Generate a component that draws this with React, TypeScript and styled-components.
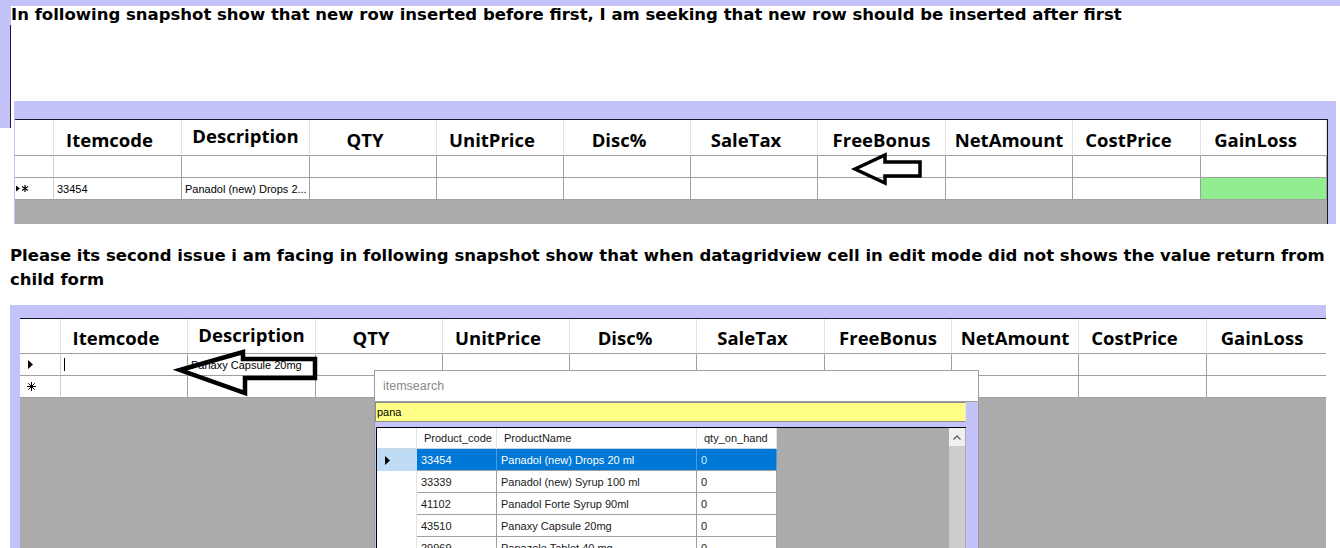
import React from "react";
import styled, { createGlobalStyle } from "styled-components";

const LAVENDER = "#c3c3f9";
const GRID_BG = "#ababab";
const CELL_LINE = "#a0a0a0";
const HEAD_LINE = "#e2e2e2";
const DARK = "#15152e";

const GlobalStyle = createGlobalStyle`
  html, body { margin: 0; padding: 0; background: #ffffff; }
  body { font-family: "Liberation Sans", Arial, sans-serif; color: #000; }
  * { box-sizing: border-box; }
`;

const Page = styled.div`
  position: relative;
  width: 1340px;
  height: 548px;
  overflow: hidden;
  display: flex;
  flex-direction: column;
`;

const TopBand = styled.div`
  height: 6px;
  flex: none;
  background: ${LAVENDER};
`;

const TopSection = styled.section`
  display: flex;
  height: 218px;
  flex: none;
`;

const LeftStrip = styled.div`
  width: 11px;
  height: 122px;
  flex: none;
  background: linear-gradient(#1c1c3a, #1c1c3a) right bottom / 1px 103px no-repeat,
    ${LAVENDER};
`;

const TopContent = styled.div`
  flex: 1;
  display: flex;
  flex-direction: column;
  min-width: 0;
`;

const Heading = styled.h1<{ $indent: number; $mt: number }>`
  margin: ${(p) => p.$mt}px 0 0 ${(p) => p.$indent}px;
  font-family: "DejaVu Sans", Verdana, sans-serif;
  font-weight: 700;
  font-size: 16.5px;
  line-height: 18px;
  white-space: nowrap;
  color: #000;
`;

const Heading2 = styled(Heading)`
  line-height: 24px;
`;

const Frame = styled.div<{
  $mt: number;
  $ml: number;
  $w: number;
  $h: number;
  $pt: number;
  $pl: number;
  $pr: number;
}>`
  position: relative;
  flex: none;
  margin: ${(p) => p.$mt}px 0 0 ${(p) => p.$ml}px;
  width: ${(p) => p.$w}px;
  height: ${(p) => p.$h}px;
  padding: ${(p) => p.$pt}px ${(p) => p.$pr}px 0 ${(p) => p.$pl}px;
  background: ${LAVENDER};
`;

const DataGrid = styled.div<{ $edge?: boolean }>`
  height: 100%;
  background: ${GRID_BG};
  border-top: 1px solid ${DARK};
  border-right: ${(p) => (p.$edge ? `1px solid ${DARK}` : "none")};
  overflow: hidden;
  display: flex;
  flex-direction: column;
`;

const GridRow = styled.div<{ $cols: string; $h: number }>`
  display: grid;
  grid-template-columns: ${(p) => p.$cols};
  height: ${(p) => p.$h}px;
  flex: none;
`;

const HeadCell = styled.div<{ $pt: number; $full?: boolean }>`
  background: #fff;
  border-right: 1px solid ${HEAD_LINE};
  border-bottom: 1px solid ${CELL_LINE};
  display: flex;
  justify-content: center;
  align-items: flex-start;
  padding-top: ${(p) => p.$pt}px;
  padding-right: ${(p) => (p.$full ? 0 : 16)}px;
  font-family: "Open Sans", "DejaVu Sans", sans-serif;
  font-weight: 700;
  font-size: 18.5px;
  line-height: 25px;
  white-space: nowrap;
  color: #000;
`;

const Cell = styled.div<{ $bg?: string }>`
  background: ${(p) => p.$bg ?? "#fff"};
  border-right: 1px solid ${CELL_LINE};
  border-bottom: 1px solid ${CELL_LINE};
  display: flex;
  align-items: center;
  padding-left: 3px;
  font-family: "Liberation Sans", Arial, sans-serif;
  font-size: 11px;
  white-space: nowrap;
  overflow: hidden;
  color: #000;
`;

const RowHead = styled(Cell)<{ $pad: number }>`
  padding-left: ${(p) => p.$pad}px;
  border-right-color: #d0d0d0;
`;

const Caret = styled.span`
  display: block;
  width: 1px;
  height: 13px;
  background: #000;
`;

const Arrow = styled.svg<{ $x: number; $y: number }>`
  position: absolute;
  left: ${(p) => p.$x}px;
  top: ${(p) => p.$y}px;
  overflow: visible;
  pointer-events: none;
`;

/* itemsearch child form */
const Popup = styled.div`
  position: absolute;
  left: 364px;
  top: 65px;
  width: 605px;
  height: 200px;
  border: 1px solid #9c9c9c;
  background: ${LAVENDER};
  display: flex;
  flex-direction: column;
`;

const TitleBar = styled.div`
  height: 31px;
  flex: none;
  background: #fff;
  border-bottom: 1px solid #a0a0a0;
  display: flex;
  align-items: center;
  padding-left: 8px;
  font-family: "Liberation Sans", Arial, sans-serif;
  font-size: 12.5px;
  color: #8a8a8a;
`;

const PopBody = styled.div`
  flex: 1;
  display: flex;
  flex-direction: column;
  padding-right: 12px;
`;

const SearchBox = styled.input`
  height: 20px;
  width: 100%;
  margin: 0;
  padding: 0 0 0 1px;
  border: 1px solid #8c8c8c;
  border-right-color: #e6e6e6;
  background: #ffff88;
  font-family: "Liberation Sans", Arial, sans-serif;
  font-size: 11px;
  color: #000;
  outline: none;
`;

const InnerGrid = styled.div`
  flex: 1;
  margin: 5px 0 0 1px;
  border-top: 1px solid #000;
  border-left: 1px solid #000;
  background: ${GRID_BG};
  display: flex;
`;

const PopTable = styled.div`
  flex: 1;
  display: flex;
  flex-direction: column;
`;

const PopRow = styled.div<{ $h: number }>`
  display: grid;
  grid-template-columns: 40px 80px 200px 80px;
  height: ${(p) => p.$h}px;
`;

const PopHead = styled.div`
  background: #fff;
  border-right: 1px solid #e3e3e3;
  border-bottom: 1px solid #c9d6e2;
  display: flex;
  align-items: center;
  padding-left: 7px;
  font-family: "Liberation Sans", Arial, sans-serif;
  font-size: 11px;
  color: #1a1a1a;
  white-space: nowrap;
`;

const PopCell = styled.div<{ $sel?: boolean; $fg?: string }>`
  background: ${(p) => (p.$sel ? "#0078d7" : "#fff")};
  border-right: 1px solid ${(p) => (p.$sel ? "#4a9be0" : CELL_LINE)};
  border-bottom: 1px solid ${CELL_LINE};
  display: flex;
  align-items: center;
  padding-left: 4px;
  font-family: "Liberation Sans", Arial, sans-serif;
  font-size: 11px;
  color: ${(p) => p.$fg ?? (p.$sel ? "#fff" : "#1a1a1a")};
  white-space: nowrap;
  overflow: hidden;
`;

const PopRowHead = styled.div<{ $sel?: boolean }>`
  background: ${(p) => (p.$sel ? "#bfdcf4" : "#fff")};
  border-right: 1px solid ${(p) => (p.$sel ? "#bfdcf4" : "#e3e3e3")};
  display: flex;
  align-items: center;
  padding-left: 8px;
`;

const ScrollBar = styled.div`
  width: 16px;
  flex: none;
  margin-right: 1px;
  background: #cdcdcd;
  display: flex;
  flex-direction: column;
`;

const ScrollButton = styled.div`
  height: 18px;
  background: #f0f0f0;
  display: flex;
  align-items: center;
  justify-content: center;
`;

const COLS1 = "39px 128px 128px 127px 127px 127px 127px 128px 127px 128px 126px";
const COLS2 = "41px 127px 128px 127px 127px 127px 128px 127px 127px 128px 127px";

const HEADERS = [
  "Itemcode",
  "Description",
  "QTY",
  "UnitPrice",
  "Disc%",
  "SaleTax",
  "FreeBonus",
  "NetAmount",
  "CostPrice",
  "GainLoss",
];
const FULL = ["Description", "FreeBonus", "NetAmount"];

const ITEMS = [
  ["33454", "Panadol (new) Drops 20 ml", "0"],
  ["33339", "Panadol (new) Syrup 100 ml", "0"],
  ["41102", "Panadol Forte Syrup 90ml", "0"],
  ["43510", "Panaxy Capsule 20mg", "0"],
  ["29969", "Panazole Tablet 40 mg", "0"],
];

const CurrentMark: React.FC = () => (
  <svg width="5" height="9" viewBox="0 0 5 9">
    <polygon points="0,0 5,4.5 0,9" fill="#000" />
  </svg>
);

const NewMark: React.FC = () => (
  <svg width="9" height="9" viewBox="0 0 9 9" stroke="#000" strokeWidth="1">
    <line x1="4.5" y1="0" x2="4.5" y2="9" />
    <line x1="0" y1="4.5" x2="9" y2="4.5" />
    <line x1="1.3" y1="1.3" x2="7.7" y2="7.7" />
    <line x1="7.7" y1="1.3" x2="1.3" y2="7.7" />
  </svg>
);

const CurrentNewMark: React.FC = () => (
  <svg width="13" height="7" viewBox="0 0 13 7">
    <polygon points="0,0.5 4,3.5 0,6.5" fill="#000" />
    <g stroke="#000" strokeWidth="1.2">
      <line x1="9" y1="0" x2="9" y2="7" />
      <line x1="6" y1="1.6" x2="12" y2="5.4" />
      <line x1="12" y1="1.6" x2="6" y2="5.4" />
    </g>
  </svg>
);

const HeaderRow: React.FC<{ cols: string; h: number; pt: number }> = ({
  cols,
  h,
  pt,
}) => (
  <GridRow $cols={cols} $h={h}>
    <HeadCell $pt={pt} />
    {HEADERS.map((name) => (
      <HeadCell
        key={name}
        $pt={name === "Description" ? 3 : pt}
        $full={FULL.includes(name)}
      >
        {name}
      </HeadCell>
    ))}
  </GridRow>
);

function App() {
  return (
    <>
      <GlobalStyle />
      <Page>
        <TopBand />
        <TopSection>
          <LeftStrip />
          <TopContent>
            <Heading $indent={0} $mt={0}>
              In following snapshot show that new row inserted before first, I
              am seeking that new row should be inserted after first
            </Heading>
            <Frame $mt={77} $ml={3} $w={1322} $h={123} $pt={18} $pl={1} $pr={8}>
              <DataGrid $edge>
                <HeaderRow cols={COLS1} h={36} pt={7} />
                <GridRow $cols={COLS1} $h={22}>
                  <RowHead $pad={1} />
                  {HEADERS.map((n) => (
                    <Cell key={n} />
                  ))}
                </GridRow>
                <GridRow $cols={COLS1} $h={22}>
                  <RowHead $pad={1}>
                    <CurrentNewMark />
                  </RowHead>
                  <Cell>33454</Cell>
                  <Cell>Panadol (new) Drops 2...</Cell>
                  {HEADERS.slice(2, 9).map((n) => (
                    <Cell key={n} />
                  ))}
                  <Cell $bg="#90ee90" />
                </GridRow>
              </DataGrid>
            </Frame>
          </TopContent>
        </TopSection>

        <Heading2 $indent={10} $mt={20}>
          Please its second issue i am facing in following snapshot show that
          when datagridview cell in edit mode did not shows the value return from
          <br />
          child form
        </Heading2>

        <Frame $mt={13} $ml={10} $w={1316} $h={300} $pt={13} $pl={10} $pr={0}>
          <DataGrid>
            <HeaderRow cols={COLS2} h={35} pt={6} />
            <GridRow $cols={COLS2} $h={22}>
              <RowHead $pad={8}>
                <CurrentMark />
              </RowHead>
              <Cell>
                <Caret />
              </Cell>
              <Cell>Panaxy Capsule 20mg</Cell>
              {HEADERS.slice(2).map((n) => (
                <Cell key={n} />
              ))}
            </GridRow>
            <GridRow $cols={COLS2} $h={22}>
              <RowHead $pad={7}>
                <NewMark />
              </RowHead>
              {HEADERS.map((n) => (
                <Cell key={n} />
              ))}
            </GridRow>
          </DataGrid>

          <Popup>
            <TitleBar>itemsearch</TitleBar>
            <PopBody>
              <SearchBox readOnly value="pana" />
              <InnerGrid>
                <PopTable>
                  <PopRow $h={21}>
                    <PopHead />
                    <PopHead>Product_code</PopHead>
                    <PopHead>ProductName</PopHead>
                    <PopHead>qty_on_hand</PopHead>
                  </PopRow>
                  {ITEMS.map(([code, name, qty], i) => (
                    <PopRow key={code} $h={22}>
                      <PopRowHead $sel={i === 0}>
                        {i === 0 && <CurrentMark />}
                      </PopRowHead>
                      <PopCell $sel={i === 0}>{code}</PopCell>
                      <PopCell $sel={i === 0}>{name}</PopCell>
                      <PopCell $sel={i === 0} $fg={i === 0 ? "#c8f0ff" : undefined}>
                        {qty}
                      </PopCell>
                    </PopRow>
                  ))}
                </PopTable>
                <ScrollBar>
                  <ScrollButton>
                    <svg width="8" height="5" viewBox="0 0 8 5">
                      <polyline
                        points="0.5,4.5 4,1 7.5,4.5"
                        fill="none"
                        stroke="#606060"
                        strokeWidth="1.4"
                      />
                    </svg>
                  </ScrollButton>
                </ScrollBar>
              </InnerGrid>
            </PopBody>
          </Popup>
        </Frame>

        <Arrow $x={850} $y={150} width="75" height="38" viewBox="0 0 75 38">
          <polygon
            points="5,19 35,5 35,12 70,12 70,26 35,26 35,33"
            fill="none"
            stroke="#000"
            strokeWidth="3.5"
            strokeLinejoin="miter"
          />
        </Arrow>
        <Arrow $x={175} $y={346} width="145" height="52" viewBox="0 0 145 52">
          <polygon
            points="5,24 68,6 68,13 140,13 140,32 70,32 70,47"
            fill="none"
            stroke="#000"
            strokeWidth="4.5"
            strokeLinejoin="miter"
          />
        </Arrow>
      </Page>
    </>
  );
}

export default App;
